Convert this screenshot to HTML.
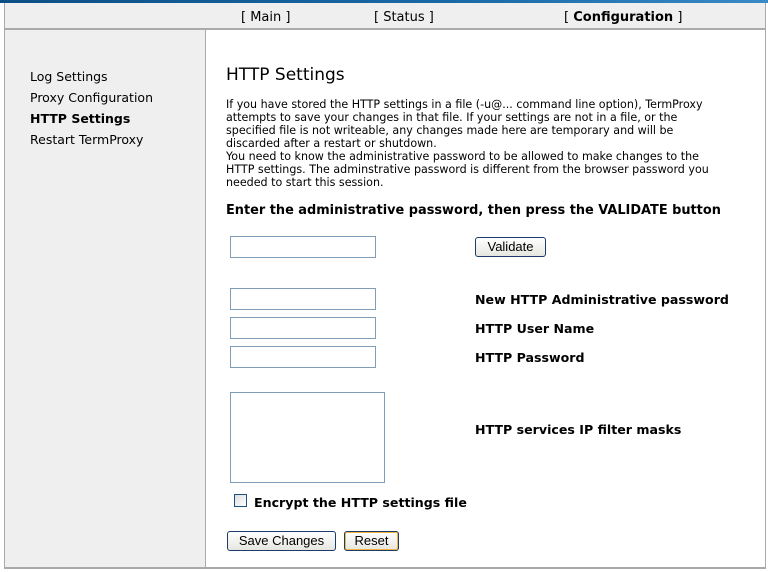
<!DOCTYPE html>
<html><head><meta charset="utf-8"><style>
*{margin:0;padding:0;box-sizing:border-box}
body{width:768px;height:572px;background:#fff;position:relative;overflow:hidden;font-family:"DejaVu Sans","Liberation Sans",sans-serif;color:#000}
.a{position:absolute;white-space:nowrap}
.top{left:0;top:0;width:768px;height:3px;background:linear-gradient(90deg,#0c4f86,#1a6aa8 60%,#3a8ac8)}
.nav{left:4px;top:3px;width:762px;height:27px;background:#efefef;border-left:1px solid #aaa;border-right:1px solid #aaa;border-bottom:2px solid #aaa;font-size:13px}
.side{left:4px;top:30px;width:202px;height:538px;background:#efefef;border-left:1px solid #aaa;border-right:1px solid #aaa}
.rb{left:765px;top:30px;width:1px;height:538px;background:#aaa}
.bot{left:4px;top:567px;width:762px;height:2px;background:#aaa}
.sl{font-size:12.5px;left:30px}
.p{left:226px;top:98px;font-size:11.1px;line-height:13px}
.b{font-weight:bold;font-size:12.6px}
.in{border:1px solid #7f9db9;background:#fff}
.btn{border:1px solid #1c3a6a;border-radius:3px;background:linear-gradient(#fff,#e6e6e0);font-family:"Liberation Sans",sans-serif;font-size:13px;text-align:center;line-height:18px}
</style></head><body>
<div class="a top"></div>
<div class="a nav"></div>
<div class="a" style="left:241px;top:10px;font-size:13px">[ Main ]</div>
<div class="a" style="left:374px;top:10px;font-size:13px">[ Status ]</div>
<div class="a" style="left:564px;top:10px;font-size:13px">[ <b>Configuration</b> ]</div>
<div class="a side"></div>
<div class="a rb"></div>
<div class="a bot"></div>
<div class="a sl" style="top:69px">Log Settings</div>
<div class="a sl" style="top:90px">Proxy Configuration</div>
<div class="a sl" style="top:111px;font-weight:bold">HTTP Settings</div>
<div class="a sl" style="top:132px">Restart TermProxy</div>
<div class="a" style="left:226px;top:65px;font-size:17px">HTTP Settings</div>
<div class="a p">If you have stored the HTTP settings in a file (-u@... command line option), TermProxy<br>attempts to save your changes in that file. If your settings are not in a file, or the<br>specified file is not writeable, any changes made here are temporary and will be<br>discarded after a restart or shutdown.<br>You need to know the administrative password to be allowed to make changes to the<br>HTTP settings. The adminstrative password is different from the browser password you<br>needed to start this session.</div>
<div class="a b" style="left:226px;top:203px;font-size:12.9px">Enter the administrative password, then press the VALIDATE button</div>
<div class="a in" style="left:230px;top:236px;width:146px;height:22px"></div>
<div class="a btn" style="left:475px;top:237px;width:71px;height:20px">Validate</div>
<div class="a in" style="left:230px;top:288px;width:146px;height:22px"></div>
<div class="a b" style="left:475px;top:292px">New HTTP Administrative password</div>
<div class="a in" style="left:230px;top:317px;width:146px;height:22px"></div>
<div class="a b" style="left:475px;top:321px">HTTP User Name</div>
<div class="a in" style="left:230px;top:346px;width:146px;height:22px"></div>
<div class="a b" style="left:475px;top:350px">HTTP Password</div>
<div class="a in" style="left:230px;top:392px;width:155px;height:91px"></div>
<div class="a b" style="left:475px;top:422px">HTTP services IP filter masks</div>
<div class="a" style="left:234px;top:494px;width:13px;height:13px;border:1px solid #1c5180;background:linear-gradient(135deg,#ddd,#fff)"></div>
<div class="a b" style="left:254px;top:495px;font-size:12.6px">Encrypt the HTTP settings file</div>
<div class="a btn" style="left:227px;top:531px;width:109px;height:20px">Save Changes</div>
<div class="a btn" style="left:344px;top:531px;width:55px;height:20px;box-shadow:inset 0 0 0 1px #f5b340">Reset</div>
</body></html>
